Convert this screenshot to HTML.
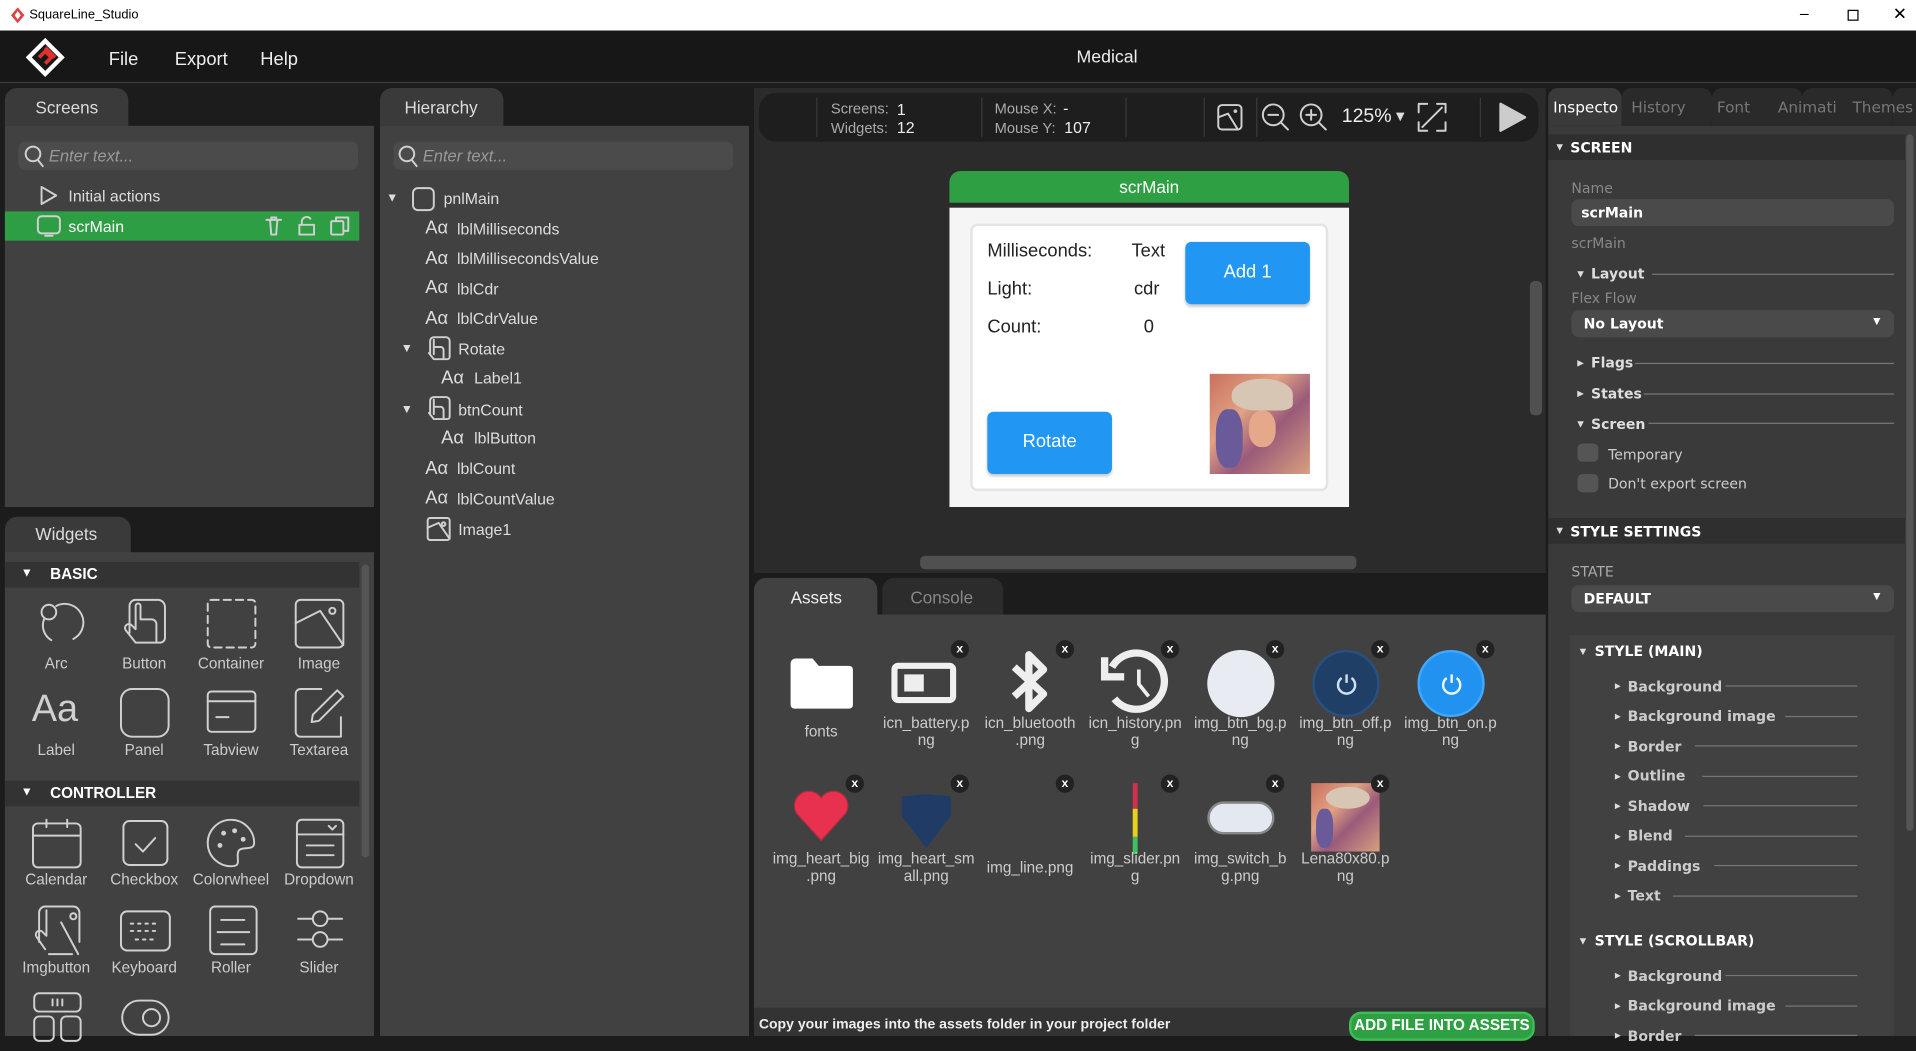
<!DOCTYPE html>
<html><head><meta charset="utf-8">
<style>
*{margin:0;padding:0;box-sizing:border-box}
html,body{width:1916px;height:1036px;overflow:hidden;background:#1c1c1c}
#w{position:absolute;left:0;top:0;width:1568px;height:848px;transform:scale(1.22194,1.2217);transform-origin:0 0;font-family:"Liberation Sans",sans-serif;color:#ddd;background:#1c1c1c}
.a{position:absolute}
.t{position:absolute;white-space:nowrap}
svg{position:absolute;overflow:visible}
.ic{fill:none;stroke:#d0d0d0;stroke-width:1.6;stroke-linecap:round;stroke-linejoin:round}
.ins{font-family:"DejaVu Sans",sans-serif;font-size:11.5px;color:#ccc}
.b{font-weight:bold}
.line{position:absolute;height:1px;background:#777}
.x{position:absolute;width:15px;height:15px;border-radius:50%;background:#222;color:#fff;font-size:10px;font-weight:bold;text-align:center;line-height:15px}
.al{position:absolute;width:86px;text-align:center;font-size:12.5px;color:#ccc;line-height:14px}
.wl{position:absolute;width:72px;text-align:center;font-size:12.5px;color:#ccc}
</style></head><body><div id="w">
<!-- title bar -->
<div class="a" style="left:0;top:0;width:1568px;height:25px;background:#fff"></div>
<svg style="left:9px;top:6px" width="11" height="13"><path d="M5.5 0L11 6.5 5.5 13 0 6.5Z" fill="#e04040"/><path d="M5.5 3L8 6.5 5.5 10 3 6.5Z" fill="#fff"/></svg>
<div class="t" style="left:24px;top:6px;font-size:10.5px;color:#000">SquareLine_Studio</div>
<div class="t" style="left:1473px;top:3px;font-size:13px;color:#000">–</div>
<div class="a" style="left:1512px;top:8px;width:9px;height:9px;border:1px solid #000"></div>
<div class="t" style="left:1549px;top:3px;font-size:14px;color:#000">✕</div>
<!-- menu bar -->
<div class="a" style="left:0;top:25px;width:1568px;height:43px;background:#171717;border-bottom:1px solid #3c3c3c"></div>
<svg style="left:20px;top:30px" width="34" height="34"><path d="M17 1L33 17 17 33 1 17Z" fill="#fff"/><path d="M17 6L28 17 17 28 6 17Z" fill="#171717"/><path d="M12 17L17 12 22 17 17 22" stroke="#e03030" stroke-width="3" fill="none"/><path d="M17 9L25 17" stroke="#e03030" stroke-width="3"/></svg>
<div class="t" style="left:89px;top:40px;font-size:15px;color:#eee">File</div>
<div class="t" style="left:143px;top:40px;font-size:15px;color:#eee">Export</div>
<div class="t" style="left:213px;top:40px;font-size:15px;color:#eee">Help</div>
<div class="t" style="left:881px;top:39px;font-size:14.5px;color:#eee">Medical</div>

<!-- Screens panel -->
<div class="a" style="left:4px;top:72px;width:101px;height:32px;background:#3a3a3a;border-radius:10px 10px 0 0"></div>
<div class="t" style="left:29px;top:80px;font-size:14px;color:#ddd">Screens</div>
<div class="a" style="left:4px;top:103px;width:302px;height:312px;background:#414141"></div>
<div class="a" style="left:15px;top:116px;width:278px;height:23px;background:#4b4b4b;border-radius:5px"></div>
<svg style="left:20px;top:119px" width="16" height="18"><circle cx="7" cy="7" r="6" class="ic" stroke="#aaa"/><path d="M11 12L15 17" class="ic"/></svg>
<div class="t" style="left:40px;top:120px;font-size:13.5px;color:#999;font-style:italic">Enter text...</div>
<svg style="left:33px;top:152px" width="14" height="16"><path d="M1 1L13 8 1 15Z" class="ic"/></svg>
<div class="t" style="left:56px;top:153px;font-size:13px;color:#ddd">Initial actions</div>
<div class="a" style="left:4px;top:173px;width:290px;height:24px;background:#2e9e45"></div>
<svg style="left:30px;top:176px" width="20" height="18"><rect x="1" y="1" width="18" height="14" rx="3" class="ic" stroke="#eee"/><path d="M7 17H13" class="ic" stroke="#eee"/></svg>
<div class="t" style="left:56px;top:178px;font-size:13px;color:#fff">scrMain</div>
<svg style="left:217px;top:177px" width="14" height="16"><path d="M1 3H13M4 3L5 15H9L10 3M5 3V1H9V3" class="ic" stroke="#ddd"/></svg>
<svg style="left:244px;top:177px" width="14" height="16"><rect x="1" y="7" width="12" height="8" class="ic" stroke="#ddd"/><path d="M3 7V4A4 4 0 0 1 10 2" class="ic" stroke="#ddd"/></svg>
<svg style="left:270px;top:177px" width="16" height="16"><rect x="1" y="4" width="10" height="11" rx="1" class="ic" stroke="#ddd"/><path d="M5 4V1H15V12H11" class="ic" stroke="#ddd"/></svg>

<!-- Widgets panel -->
<div class="a" style="left:4px;top:423px;width:103px;height:30px;background:#3a3a3a;border-radius:10px 10px 0 0"></div>
<div class="t" style="left:29px;top:429px;font-size:14px;color:#ddd">Widgets</div>
<div class="a" style="left:4px;top:452px;width:302px;height:396px;background:#414141"></div>
<div class="a" style="left:296px;top:462px;width:6px;height:240px;background:#555;border-radius:3px"></div>
<div class="a" style="left:4px;top:460px;width:290px;height:21px;background:#333"></div>
<div class="t" style="left:17px;top:464px;font-size:10px;color:#fff">▼</div>
<div class="t b" style="left:41px;top:463px;font-size:12.5px;color:#fff">BASIC</div>
<div class="a" style="left:4px;top:639px;width:290px;height:21px;background:#333"></div>
<div class="t" style="left:17px;top:643px;font-size:10px;color:#fff">▼</div>
<div class="t b" style="left:41px;top:642px;font-size:12.5px;color:#fff">CONTROLLER</div>
<!-- row1 icons -->
<svg style="left:26px;top:490px" width="42" height="42"><circle cx="14" cy="11" r="6" class="ic"/><path d="M18 6A14 14 0 0 1 32 33M20 0M14 34A14 14 0 0 1 8 17" class="ic" transform="translate(2,0)"/></svg>
<svg style="left:98px;top:490px" width="42" height="42"><path d="M8 28V6A5 5 0 0 1 13 1H32A6 6 0 0 1 37 7V32A4 4 0 0 1 33 36H13L5 26A3 3 0 0 1 10 22L13 25V6A2 2 0 0 1 17 6V17H26A4 4 0 0 1 30 21V35" class="ic"/></svg>
<svg style="left:169px;top:490px" width="42" height="42"><rect x="1" y="1" width="39" height="39" rx="3" class="ic" stroke-dasharray="6 4"/></svg>
<svg style="left:241px;top:490px" width="42" height="42"><rect x="1" y="1" width="39" height="39" rx="4" class="ic"/><circle cx="31" cy="10" r="2.5" class="ic"/><path d="M1 20L21 10L40 38" class="ic"/></svg>
<div class="wl" style="left:10px;top:536px">Arc</div>
<div class="wl" style="left:82px;top:536px">Button</div>
<div class="wl" style="left:153px;top:536px">Container</div>
<div class="wl" style="left:225px;top:536px">Image</div>
<div class="t" style="left:26px;top:562px;font-size:31px;color:#d0d0d0;font-weight:300">Aa</div>
<svg style="left:98px;top:563px" width="42" height="42"><rect x="1" y="1" width="39" height="39" rx="9" class="ic"/></svg>
<svg style="left:169px;top:565px" width="42" height="42"><rect x="1" y="1" width="39" height="33" rx="3" class="ic"/><path d="M1 9H40M8 22H18" class="ic"/></svg>
<svg style="left:241px;top:563px" width="42" height="42"><path d="M22 1H5A4 4 0 0 0 1 5V36A4 4 0 0 0 5 40H38V24M38 5L35 2L15 22L14 28L20 27L40 7Z" class="ic"/></svg>
<div class="wl" style="left:10px;top:607px">Label</div>
<div class="wl" style="left:82px;top:607px">Panel</div>
<div class="wl" style="left:153px;top:607px">Tabview</div>
<div class="wl" style="left:225px;top:607px">Textarea</div>
<!-- row3 -->
<svg style="left:26px;top:670px" width="42" height="42"><rect x="1" y="4" width="39" height="36" rx="4" class="ic"/><path d="M1 14H40M12 1V7M29 1V7" class="ic"/></svg>
<svg style="left:98px;top:671px" width="42" height="42"><rect x="3" y="1" width="36" height="36" rx="5" class="ic"/><path d="M13 20L19 26L29 15" class="ic"/></svg>
<svg style="left:169px;top:670px" width="42" height="42"><path d="M21 39A19 19 0 1 1 39 20C39 27 28 22 26 27C24 32 29 39 21 39Z" class="ic"/><circle cx="11" cy="22" r="2" fill="#d0d0d0"/><circle cx="14" cy="12" r="2" fill="#d0d0d0"/><circle cx="23" cy="10" r="2" fill="#d0d0d0"/><circle cx="30" cy="17" r="2" fill="#d0d0d0"/></svg>
<svg style="left:241px;top:670px" width="42" height="42"><rect x="2" y="1" width="38" height="39" rx="4" class="ic"/><path d="M2 13H40M28 6L31 9L34 6M10 22H32M10 30H32" class="ic"/></svg>
<div class="wl" style="left:10px;top:713px">Calendar</div>
<div class="wl" style="left:82px;top:713px">Checkbox</div>
<div class="wl" style="left:153px;top:713px">Colorwheel</div>
<div class="wl" style="left:225px;top:713px">Dropdown</div>
<svg style="left:26px;top:741px" width="42" height="42"><path d="M6 30V6A5 5 0 0 1 11 1H34A5 5 0 0 1 39 6V30M11 36L4 26A3 3 0 0 1 9 22L12 25L12 4M24 14L38 40M33 40H14" class="ic"/><circle cx="34" cy="9" r="2.5" class="ic"/></svg>
<svg style="left:98px;top:745px" width="42" height="42"><rect x="1" y="1" width="40" height="32" rx="5" class="ic"/><path d="M9 11H33M9 17H33M13 24H29" class="ic" stroke-dasharray="2 4"/></svg>
<svg style="left:169px;top:741px" width="42" height="42"><rect x="3" y="1" width="38" height="39" rx="4" class="ic"/><path d="M12 12H31M9 22H35M12 32H31" class="ic"/></svg>
<svg style="left:241px;top:743px" width="42" height="42"><path d="M3 9H14M28 9H39M3 26H14M28 26H39" class="ic"/><circle cx="21" cy="9" r="6" class="ic"/><circle cx="21" cy="26" r="6" class="ic"/></svg>
<div class="wl" style="left:10px;top:785px">Imgbutton</div>
<div class="wl" style="left:82px;top:785px">Keyboard</div>
<div class="wl" style="left:153px;top:785px">Roller</div>
<div class="wl" style="left:225px;top:785px">Slider</div>
<svg style="left:26px;top:812px" width="42" height="42"><rect x="2" y="1" width="38" height="15" rx="4" class="ic"/><rect x="2" y="20" width="16" height="20" rx="4" class="ic"/><rect x="24" y="20" width="16" height="20" rx="4" class="ic"/><path d="M17 6V11M21 6V11M25 6V11" class="ic"/></svg>
<svg style="left:98px;top:818px" width="42" height="42"><rect x="2" y="1" width="38" height="28" rx="14" class="ic"/><circle cx="26" cy="15" r="7" class="ic"/></svg>

<!-- Hierarchy -->
<div class="a" style="left:311px;top:72px;width:101px;height:32px;background:#3a3a3a;border-radius:10px 10px 0 0"></div>
<div class="t" style="left:331px;top:80px;font-size:14px;color:#ddd">Hierarchy</div>
<div class="a" style="left:311px;top:103px;width:302px;height:745px;background:#414141"></div>
<div class="a" style="left:322px;top:116px;width:278px;height:23px;background:#4b4b4b;border-radius:5px"></div>
<svg style="left:326px;top:119px" width="16" height="18"><circle cx="7" cy="7" r="6" class="ic" stroke="#aaa"/><path d="M11 12L15 17" class="ic"/></svg>
<div class="t" style="left:346px;top:120px;font-size:13.5px;color:#999;font-style:italic">Enter text...</div>
<div class="t" style="left:316px;top:157px;font-size:10px">▼</div>
<svg style="left:337px;top:153px" width="20" height="20"><rect x="1" y="1" width="17" height="18" rx="4" class="ic"/></svg>
<div class="t" style="left:363px;top:155px;font-size:13px">pnlMain</div>
<div class="t" style="left:348px;top:178px;font-size:15px;color:#ddd">Aα</div><div class="t" style="left:374px;top:180px;font-size:13px">lblMilliseconds</div>
<div class="t" style="left:348px;top:203px;font-size:15px;color:#ddd">Aα</div><div class="t" style="left:374px;top:204px;font-size:13px">lblMillisecondsValue</div>
<div class="t" style="left:348px;top:227px;font-size:15px;color:#ddd">Aα</div><div class="t" style="left:374px;top:229px;font-size:13px">lblCdr</div>
<div class="t" style="left:348px;top:252px;font-size:15px;color:#ddd">Aα</div><div class="t" style="left:374px;top:253px;font-size:13px">lblCdrValue</div>
<div class="t" style="left:328px;top:280px;font-size:10px">▼</div>
<svg style="left:349px;top:275px" width="20" height="20"><path d="M3 15V4A3 3 0 0 1 6 1H16A3 3 0 0 1 19 4V17A2 2 0 0 1 17 19H6L2 14M6 15V3M6 9H12A3 3 0 0 1 14 12V19" class="ic"/></svg>
<div class="t" style="left:375px;top:278px;font-size:13px">Rotate</div>
<div class="t" style="left:361px;top:301px;font-size:15px;color:#ddd">Aα</div><div class="t" style="left:388px;top:302px;font-size:13px">Label1</div>
<div class="t" style="left:328px;top:330px;font-size:10px">▼</div>
<svg style="left:349px;top:324px" width="20" height="20"><path d="M3 15V4A3 3 0 0 1 6 1H16A3 3 0 0 1 19 4V17A2 2 0 0 1 17 19H6L2 14M6 15V3M6 9H12A3 3 0 0 1 14 12V19" class="ic"/></svg>
<div class="t" style="left:375px;top:328px;font-size:13px">btnCount</div>
<div class="t" style="left:361px;top:350px;font-size:15px;color:#ddd">Aα</div><div class="t" style="left:388px;top:351px;font-size:13px">lblButton</div>
<div class="t" style="left:348px;top:375px;font-size:15px;color:#ddd">Aα</div><div class="t" style="left:374px;top:376px;font-size:13px">lblCount</div>
<div class="t" style="left:348px;top:399px;font-size:15px;color:#ddd">Aα</div><div class="t" style="left:374px;top:401px;font-size:13px">lblCountValue</div>
<svg style="left:349px;top:423px" width="20" height="20"><rect x="1" y="1" width="18" height="18" rx="2" class="ic"/><circle cx="14" cy="6" r="1.5" class="ic"/><path d="M1 9L10 5L19 18" class="ic"/></svg>
<div class="t" style="left:375px;top:426px;font-size:13px">Image1</div>

<!-- Canvas -->
<div class="a" style="left:617px;top:72px;width:648px;height:397px;background:#2b2b2b"></div>
<div class="a" style="left:621px;top:76px;width:638px;height:40px;background:#1e1e1e;border-radius:14px"></div>
<div class="a" style="left:668px;top:80px;width:1px;height:32px;background:#3a3a3a"></div>
<div class="a" style="left:803px;top:80px;width:1px;height:32px;background:#3a3a3a"></div>
<div class="a" style="left:921px;top:80px;width:1px;height:32px;background:#3a3a3a"></div>
<div class="a" style="left:985px;top:80px;width:1px;height:32px;background:#3a3a3a"></div>
<div class="a" style="left:1028px;top:80px;width:1px;height:32px;background:#3a3a3a"></div>
<div class="a" style="left:1211px;top:80px;width:1px;height:32px;background:#3a3a3a"></div>
<div class="t" style="left:680px;top:82px;font-size:12px;color:#aaa">Screens:</div><div class="t" style="left:734px;top:82px;font-size:13px;color:#eee">1</div>
<div class="t" style="left:680px;top:98px;font-size:12px;color:#aaa">Widgets:</div><div class="t" style="left:734px;top:97px;font-size:13px;color:#eee">12</div>
<div class="t" style="left:814px;top:82px;font-size:12px;color:#aaa">Mouse X:</div><div class="t" style="left:870px;top:81px;font-size:13px;color:#eee">-</div>
<div class="t" style="left:814px;top:98px;font-size:12px;color:#aaa">Mouse Y:</div><div class="t" style="left:871px;top:97px;font-size:13px;color:#eee">107</div>
<svg style="left:996px;top:85px" width="22" height="22"><rect x="1" y="1" width="19" height="20" rx="3" class="ic" stroke-width="2"/><circle cx="15" cy="6" r="1.5" fill="#ccc"/><path d="M1 11L9 8L17 21" class="ic" stroke-width="2"/></svg>
<svg style="left:1032px;top:84px" width="24" height="24"><circle cx="10" cy="10" r="8.5" class="ic" stroke-width="2"/><path d="M6 10H14M16 16L22 22" class="ic" stroke-width="2"/></svg>
<svg style="left:1063px;top:84px" width="24" height="24"><circle cx="10" cy="10" r="8.5" class="ic" stroke-width="2"/><path d="M6 10H14M10 6V14M16 16L22 22" class="ic" stroke-width="2"/></svg>
<div class="t" style="left:1098px;top:87px;font-size:16px;color:#eee">125%</div>
<div class="t" style="left:1140px;top:88px;font-size:12px;color:#ddd">▼</div>
<svg style="left:1160px;top:84px" width="24" height="24"><path d="M1 8V1H8M16 1H23V8M23 16V23H16M8 23H1V16M4 20L20 4" class="ic" stroke-width="2"/></svg>
<svg style="left:1226px;top:83px" width="24" height="26"><path d="M2 2L22 13 2 24Z" fill="#ccc" stroke="#ccc" stroke-width="2" stroke-linejoin="round"/></svg>
<div class="a" style="left:777px;top:140px;width:327px;height:26px;background:#2ea043;border-radius:9px 9px 0 0"></div>
<div class="t" style="left:777px;top:145px;width:327px;text-align:center;font-size:14px;color:#fff">scrMain</div>
<div class="a" style="left:777px;top:170px;width:327px;height:245px;background:#f5f5f5"></div>
<div class="a" style="left:794px;top:183px;width:293px;height:219px;background:#fff;border:2px solid #e4e4e6;border-radius:6px"></div>
<div class="t" style="left:808px;top:197px;font-size:15px;color:#222">Milliseconds:</div>
<div class="t" style="left:926px;top:197px;font-size:15px;color:#222">Text</div>
<div class="t" style="left:808px;top:228px;font-size:15px;color:#222">Light:</div>
<div class="t" style="left:928px;top:228px;font-size:15px;color:#222">cdr</div>
<div class="t" style="left:808px;top:259px;font-size:15px;color:#222">Count:</div>
<div class="t" style="left:936px;top:259px;font-size:15px;color:#222">0</div>
<div class="a" style="left:970px;top:198px;width:102px;height:51px;background:#2196f3;border-radius:5px;box-shadow:0 2px 2px #ccc"></div>
<div class="t" style="left:970px;top:214px;width:102px;text-align:center;font-size:15px;color:#fff">Add 1</div>
<div class="a" style="left:808px;top:337px;width:102px;height:51px;background:#2196f3;border-radius:5px;box-shadow:0 2px 2px #ccc"></div>
<div class="t" style="left:808px;top:353px;width:102px;text-align:center;font-size:15px;color:#fff">Rotate</div>
<div class="a" style="left:990px;top:306px;width:82px;height:82px;background:linear-gradient(135deg,#c9705e 0%,#e2a283 35%,#9a5a7a 60%,#d8a07e 100%)"></div>
<div class="a" style="left:1008px;top:310px;width:50px;height:26px;background:#d8c6b4;border-radius:50% 50% 20% 40%"></div>
<div class="a" style="left:995px;top:335px;width:22px;height:48px;background:#6a5a9a;border-radius:40%"></div>
<div class="a" style="left:1022px;top:336px;width:22px;height:30px;background:#e6a88a;border-radius:45%"></div>
<div class="a" style="left:753px;top:455px;width:357px;height:11px;background:#505050;border-radius:4px"></div>
<div class="a" style="left:1252px;top:230px;width:10px;height:110px;background:#505050;border-radius:4px"></div>

<!-- Assets -->
<div class="a" style="left:617px;top:473px;width:101px;height:31px;background:#414141;border-radius:10px 10px 0 0"></div>
<div class="a" style="left:722px;top:473px;width:99px;height:31px;background:#2c2c2c;border-radius:10px 10px 0 0"></div>
<div class="t" style="left:647px;top:481px;font-size:14px;color:#eee">Assets</div>
<div class="t" style="left:745px;top:481px;font-size:14px;color:#888">Console</div>
<div class="a" style="left:617px;top:503px;width:648px;height:322px;background:#414141"></div>
<div class="a" style="left:617px;top:825px;width:648px;height:23px;background:#333"></div>
<div class="t b" style="left:621px;top:833px;font-size:11.5px;color:#eee">Copy your images into the assets folder in your project folder</div>
<div class="a" style="left:1104px;top:828px;width:152px;height:24px;background:#2ea043;border:2px solid #3bbf55;border-radius:10px"></div>
<div class="t b" style="left:1104px;top:832px;width:152px;text-align:center;font-size:12.5px;color:#fff">ADD FILE INTO ASSETS</div>
<!-- row1 assets -->
<svg style="left:645px;top:537px" width="54" height="44"><path d="M2 6A4 4 0 0 1 6 2H20L25 8H50A3 3 0 0 1 53 11V40A3 3 0 0 1 50 43H5A3 3 0 0 1 2 40Z" fill="#fff"/></svg>
<div class="al" style="left:629px;top:592px">fonts</div>
<svg style="left:730px;top:542px" width="56" height="34"><rect x="2" y="3" width="48" height="28" rx="3" fill="none" stroke="#f0f0f0" stroke-width="5"/><rect x="10" y="10" width="16" height="14" fill="#eee"/></svg>
<div class="x" style="left:778px;top:524px">x</div>
<div class="al" style="left:715px;top:585px">icn_battery.p<br>ng</div>
<svg style="left:826px;top:532px" width="34" height="52"><path d="M4 14L28 36L16 48V4L28 16L4 38" fill="none" stroke="#eee" stroke-width="6" stroke-linejoin="round"/></svg>
<div class="x" style="left:864px;top:524px">x</div>
<div class="al" style="left:800px;top:585px">icn_bluetooth<br>.png</div>
<svg style="left:902px;top:532px" width="56" height="54"><path d="M8 14A23 23 0 1 1 10 40" fill="none" stroke="#eee" stroke-width="6"/><path d="M2 6V22H18" fill="none" stroke="#eee" stroke-width="6"/><path d="M30 16V28L38 38" fill="none" stroke="#eee" stroke-width="3"/></svg>
<div class="x" style="left:950px;top:524px">x</div>
<div class="al" style="left:886px;top:585px">icn_history.pn<br>g</div>
<div class="a" style="left:988px;top:532px;width:55px;height:55px;border-radius:50%;background:#e8ecf2"></div>
<div class="x" style="left:1036px;top:524px">x</div>
<div class="al" style="left:972px;top:585px">img_btn_bg.p<br>ng</div>
<div class="a" style="left:1074px;top:532px;width:55px;height:55px;border-radius:50%;background:#1f3f66;border:2px solid #2a5080"></div>
<svg style="left:1093px;top:551px" width="18" height="18"><path d="M5 4A7 7 0 1 0 13 4M9 1V8" fill="none" stroke="#cfe0f0" stroke-width="2"/></svg>
<div class="x" style="left:1122px;top:524px">x</div>
<div class="al" style="left:1058px;top:585px">img_btn_off.p<br>ng</div>
<div class="a" style="left:1160px;top:532px;width:55px;height:55px;border-radius:50%;background:#2192f0;border:2px solid #40a8ff"></div>
<svg style="left:1179px;top:551px" width="18" height="18"><path d="M5 4A7 7 0 1 0 13 4M9 1V8" fill="none" stroke="#eaf6ff" stroke-width="2"/></svg>
<div class="x" style="left:1208px;top:524px">x</div>
<div class="al" style="left:1144px;top:585px">img_btn_on.p<br>ng</div>
<!-- row2 -->
<svg style="left:648px;top:644px" width="48" height="46"><path d="M24 44L4 22A11 11 0 0 1 24 9A11 11 0 0 1 44 22Z" fill="#e8304f" stroke="#a03040" stroke-width="1"/></svg>
<div class="x" style="left:692px;top:634px">x</div>
<div class="al" style="left:629px;top:696px">img_heart_big<br>.png</div>
<svg style="left:734px;top:644px" width="48" height="52"><path d="M24 50L4 24V8L24 6L44 8V24Z" fill="#1f3b66"/></svg>
<div class="x" style="left:778px;top:634px">x</div>
<div class="al" style="left:715px;top:696px">img_heart_sm<br>all.png</div>
<div class="x" style="left:864px;top:634px">x</div>
<div class="al" style="left:800px;top:703px">img_line.png</div>
<div class="a" style="left:927px;top:641px;width:4px;height:21px;background:#d0304a"></div>
<div class="a" style="left:927px;top:662px;width:4px;height:23px;background:#e8d020"></div>
<div class="a" style="left:927px;top:685px;width:4px;height:14px;background:#40c060"></div>
<div class="x" style="left:950px;top:634px">x</div>
<div class="al" style="left:886px;top:696px">img_slider.pn<br>g</div>
<div class="a" style="left:988px;top:656px;width:55px;height:27px;border-radius:14px;background:#e4e8f0;border:2px solid #888"></div>
<div class="x" style="left:1036px;top:634px">x</div>
<div class="al" style="left:972px;top:696px">img_switch_b<br>g.png</div>
<div class="a" style="left:1073px;top:641px;width:56px;height:56px;background:linear-gradient(135deg,#c9705e 0%,#e2a283 35%,#9a5a7a 60%,#d8a07e 100%)"></div>
<div class="a" style="left:1085px;top:644px;width:36px;height:18px;background:#d8c6b4;border-radius:50%"></div>
<div class="a" style="left:1077px;top:662px;width:14px;height:32px;background:#6a5a9a;border-radius:40%"></div>
<div class="x" style="left:1122px;top:634px">x</div>
<div class="al" style="left:1058px;top:696px">Lena80x80.p<br>ng</div>

<!-- Inspector -->
<div class="a" style="left:1267px;top:72px;width:301px;height:776px;background:#3a3a3a"></div>
<div class="a" style="left:1267px;top:72px;width:301px;height:31px;background:#1c1c1c"></div>
<div class="a" style="left:1267px;top:72px;width:60px;height:31px;background:#3a3a3a;border-radius:8px 8px 0 0"></div>
<div class="a" style="left:1327px;top:72px;width:74px;height:31px;background:#2a2a2a;border-radius:8px 8px 0 0"></div>
<div class="a" style="left:1401px;top:72px;width:74px;height:31px;background:#2a2a2a;border-radius:8px 8px 0 0"></div>
<div class="a" style="left:1475px;top:72px;width:74px;height:31px;background:#2a2a2a;border-radius:8px 8px 0 0"></div>
<div class="a" style="left:1549px;top:72px;width:19px;height:31px;background:#2a2a2a;border-radius:8px 0 0 0"></div>
<div class="t ins" style="left:1271px;top:80px;font-size:12.5px;color:#fff">Inspecto</div>
<div class="t ins" style="left:1335px;top:80px;font-size:12.5px;color:#777">History</div>
<div class="t ins" style="left:1405px;top:80px;font-size:12.5px;color:#777">Font</div>
<div class="t ins" style="left:1455px;top:80px;font-size:12.5px;color:#777">Animati</div>
<div class="t ins" style="left:1516px;top:80px;font-size:12.5px;color:#777">Themes</div>
<div class="a" style="left:1560px;top:110px;width:6px;height:570px;background:#555;border-radius:3px"></div>
<div class="a" style="left:1267px;top:110px;width:292px;height:21px;background:#2f2f2f"></div>
<div class="t" style="left:1272px;top:115px;font-size:9px">▼</div>
<div class="t ins b" style="left:1285px;top:114px;color:#fff;font-size:11.5px">SCREEN</div>
<div class="t ins" style="left:1286px;top:147px;color:#888">Name</div>
<div class="a" style="left:1286px;top:163px;width:264px;height:22px;background:#4a4a4a;border-radius:6px"></div>
<div class="t ins b" style="left:1294px;top:167px;color:#fff">scrMain</div>
<div class="t ins" style="left:1286px;top:192px;color:#888">scrMain</div>
<div class="t" style="left:1289px;top:219px;font-size:9px">▼</div>
<div class="t ins b" style="left:1302px;top:217px;color:#ddd">Layout</div><div class="line" style="left:1352px;top:224px;width:198px"></div>
<div class="t ins" style="left:1286px;top:237px;color:#888">Flex Flow</div>
<div class="a" style="left:1286px;top:254px;width:264px;height:22px;background:#4a4a4a;border-radius:6px"></div>
<div class="t ins b" style="left:1296px;top:258px;color:#fff">No Layout</div>
<div class="t" style="left:1531px;top:258px;font-size:10px;color:#fff">▼</div>
<div class="t" style="left:1289px;top:292px;font-size:9px">►</div><div class="t ins b" style="left:1302px;top:290px;color:#ddd">Flags</div><div class="line" style="left:1338px;top:297px;width:212px"></div>
<div class="t" style="left:1289px;top:317px;font-size:9px">►</div><div class="t ins b" style="left:1302px;top:315px;color:#ddd">States</div><div class="line" style="left:1345px;top:322px;width:205px"></div>
<div class="t" style="left:1289px;top:342px;font-size:9px">▼</div><div class="t ins b" style="left:1302px;top:340px;color:#ddd">Screen</div><div class="line" style="left:1349px;top:346px;width:201px"></div>
<div class="a" style="left:1291px;top:363px;width:17px;height:15px;background:#555;border-radius:4px"></div>
<div class="t ins" style="left:1316px;top:365px">Temporary</div>
<div class="a" style="left:1291px;top:388px;width:17px;height:15px;background:#555;border-radius:4px"></div>
<div class="t ins" style="left:1316px;top:389px">Don't export screen</div>
<div class="a" style="left:1267px;top:424px;width:292px;height:21px;background:#2f2f2f"></div>
<div class="t" style="left:1272px;top:429px;font-size:9px">▼</div>
<div class="t ins b" style="left:1285px;top:428px;color:#fff">STYLE SETTINGS</div>
<div class="t ins" style="left:1286px;top:461px;color:#aaa">STATE</div>
<div class="a" style="left:1286px;top:479px;width:264px;height:22px;background:#4a4a4a;border-radius:6px"></div>
<div class="t ins b" style="left:1296px;top:483px;color:#fff">DEFAULT</div>
<div class="t" style="left:1531px;top:483px;font-size:10px;color:#fff">▼</div>
<div class="a" style="left:1285px;top:520px;width:265px;height:328px;background:#414141"></div>
<div class="t" style="left:1291px;top:528px;font-size:9px">▼</div>
<div class="t ins b" style="left:1305px;top:526px;color:#fff">STYLE (MAIN)</div>
<div class="t" style="left:1320px;top:557px;font-size:8px">►</div><div class="t ins b" style="left:1332px;top:555px">Background</div><div class="line" style="left:1412px;top:561px;width:108px"></div>
<div class="t" style="left:1320px;top:582px;font-size:8px">►</div><div class="t ins b" style="left:1332px;top:579px">Background image</div><div class="line" style="left:1461px;top:586px;width:59px"></div>
<div class="t" style="left:1320px;top:606px;font-size:8px">►</div><div class="t ins b" style="left:1332px;top:604px">Border</div><div class="line" style="left:1387px;top:610px;width:133px"></div>
<div class="t" style="left:1320px;top:631px;font-size:8px">►</div><div class="t ins b" style="left:1332px;top:628px">Outline</div><div class="line" style="left:1393px;top:635px;width:127px"></div>
<div class="t" style="left:1320px;top:655px;font-size:8px">►</div><div class="t ins b" style="left:1332px;top:653px">Shadow</div><div class="line" style="left:1394px;top:659px;width:126px"></div>
<div class="t" style="left:1320px;top:680px;font-size:8px">►</div><div class="t ins b" style="left:1332px;top:677px">Blend</div><div class="line" style="left:1379px;top:684px;width:141px"></div>
<div class="t" style="left:1320px;top:704px;font-size:8px">►</div><div class="t ins b" style="left:1332px;top:702px">Paddings</div><div class="line" style="left:1403px;top:708px;width:117px"></div>
<div class="t" style="left:1320px;top:729px;font-size:8px">►</div><div class="t ins b" style="left:1332px;top:726px">Text</div><div class="line" style="left:1369px;top:733px;width:151px"></div>
<div class="t" style="left:1291px;top:765px;font-size:9px">▼</div>
<div class="t ins b" style="left:1305px;top:763px;color:#fff">STYLE (SCROLLBAR)</div>
<div class="t" style="left:1320px;top:794px;font-size:8px">►</div><div class="t ins b" style="left:1332px;top:792px">Background</div><div class="line" style="left:1412px;top:798px;width:108px"></div>
<div class="t" style="left:1320px;top:819px;font-size:8px">►</div><div class="t ins b" style="left:1332px;top:816px">Background image</div><div class="line" style="left:1461px;top:823px;width:59px"></div>
<div class="t" style="left:1320px;top:843px;font-size:8px">►</div><div class="t ins b" style="left:1332px;top:841px">Border</div><div class="line" style="left:1387px;top:847px;width:133px"></div>
</div></body></html>
